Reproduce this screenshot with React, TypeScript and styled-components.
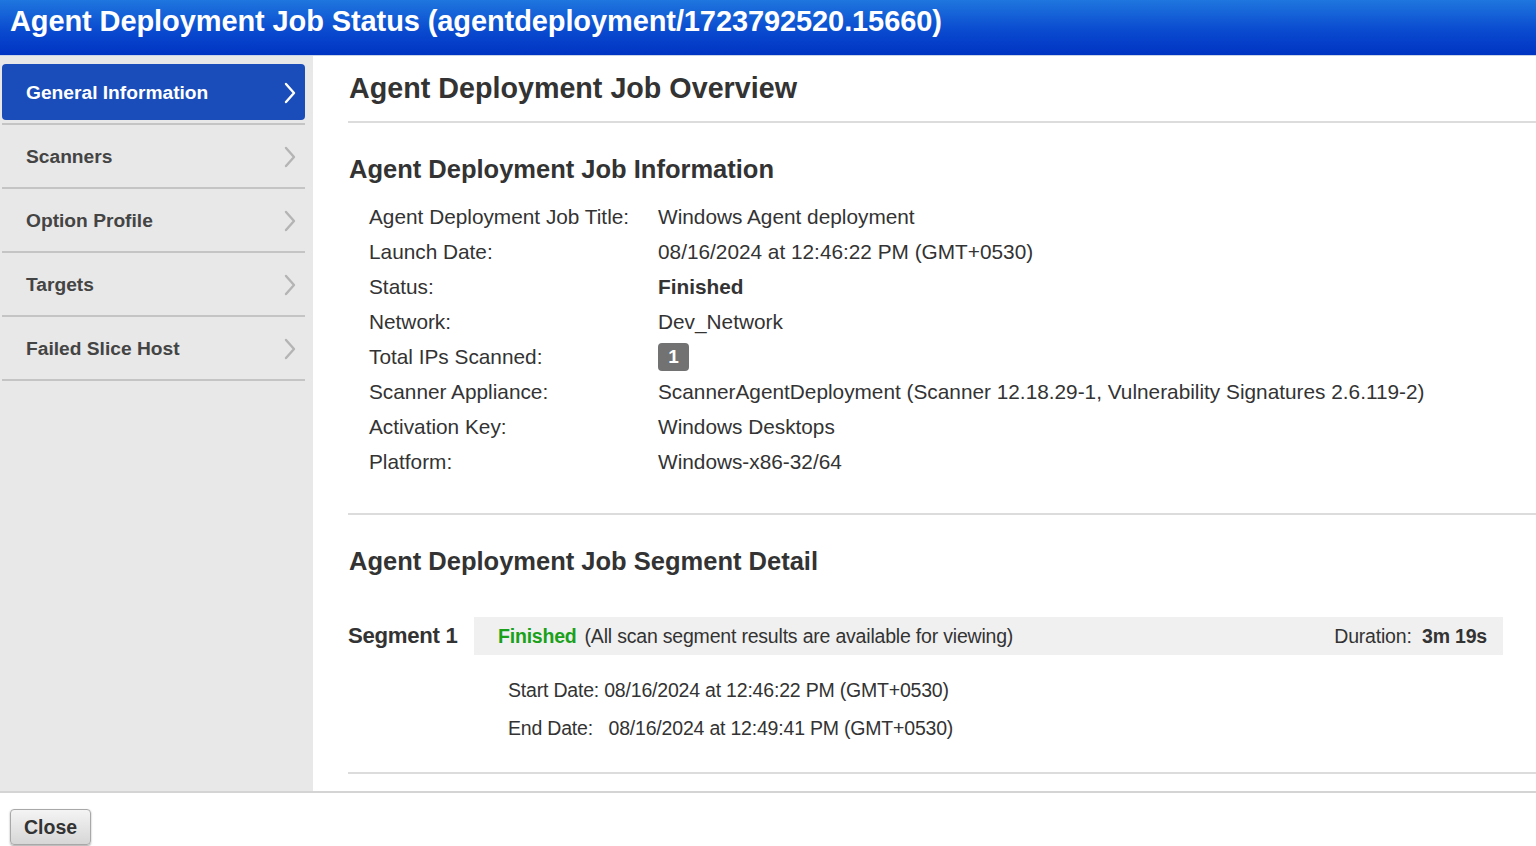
import React from 'react';
import styled, { createGlobalStyle } from 'styled-components';

const GlobalStyle = createGlobalStyle`
  html, body {
    margin: 0;
    padding: 0;
    background: #ffffff;
    font-family: "Liberation Sans", Arial, Helvetica, sans-serif;
    color: #333333;
  }
`;

const Page = styled.div`
  display: flex;
  flex-direction: column;
  width: 1536px;
  height: 846px;
  overflow: hidden;
`;

const TitleBar = styled.header`
  height: 56px;
  flex-shrink: 0;
  box-sizing: border-box;
  padding: 4px 10px 0;
  line-height: 34px;
  background: linear-gradient(to bottom, #1f76de 0%, #0a4bd0 55%, #0033c2 100%);
  border-bottom: 1px solid #c8d3e8;
  color: #ffffff;
  font-size: 29px;
  font-weight: bold;
  letter-spacing: -0.1px;
  white-space: nowrap;
`;

const Body = styled.div`
  display: flex;
  flex: 0 0 735px;
  border-bottom: 2px solid #d4d4d4;
`;

const Sidebar = styled.nav`
  width: 313px;
  flex-shrink: 0;
  background: #e8e8e8;
  padding: 8px 8px 0 2px;
  box-sizing: border-box;
`;

const NavRow = styled.div<{ $active?: boolean }>`
  padding-bottom: ${(p) => (p.$active ? '3px' : '0')};
  border-bottom: 2px solid #c4c4c4;
`;

const NavLink = styled.div<{ $active?: boolean }>`
  display: flex;
  align-items: center;
  justify-content: space-between;
  height: ${(p) => (p.$active ? '56px' : '62px')};
  padding: ${(p) => (p.$active ? '1px 8px 0 24px' : '1px 8px 0 24px')};
  box-sizing: border-box;
  border-radius: ${(p) => (p.$active ? '4px' : '0')};
  background: ${(p) => (p.$active ? '#1a4db9' : 'transparent')};
  color: ${(p) => (p.$active ? '#ffffff' : '#444444')};
  font-size: 19.2px;
  font-weight: bold;
`;

const Chevron = ({ color }: { color: string }) => (
  <svg width="14" height="22" viewBox="0 0 14 22" fill="none">
    <path d="M3 2 L11 11 L3 20" stroke={color} strokeWidth="2.4" strokeLinecap="round" strokeLinejoin="round" />
  </svg>
);

const Content = styled.main`
  flex: 1;
  padding: 0 0 0 35px;
  overflow: hidden;
`;

const PageHeading = styled.h1`
  margin: 0;
  padding: 16px 0 0 1px;
  height: 49px;
  font-size: 28.7px;
  font-weight: bold;
  color: #333333;
  border-bottom: 2px solid #dcdcdc;
`;

const Section = styled.section`
  border-bottom: 2px solid #dcdcdc;
`;

const SectionHeading = styled.h2`
  margin: 0;
  padding: 30px 0 0 1px;
  font-size: 25.5px;
  font-weight: bold;
  color: #333333;
  line-height: 32px;
`;

const InfoTable = styled.div`
  display: grid;
  grid-template-columns: 289px 1fr;
  grid-auto-rows: 35px;
  padding: 14px 0 34px 21px;
  font-size: 20.8px;
  color: #333333;
  align-items: center;
`;

const Value = styled.div<{ $bold?: boolean }>`
  font-weight: ${(p) => (p.$bold ? 'bold' : 'normal')};
`;

const CountBadge = styled.span`
  display: inline-flex;
  align-items: center;
  justify-content: center;
  width: 31px;
  height: 28px;
  border-radius: 4px;
  background: #727272;
  color: #ffffff;
  font-weight: bold;
  font-size: 19px;
  vertical-align: middle;
`;

const SegmentSection = styled.section`
  border-bottom: 2px solid #dcdcdc;
  padding-bottom: 25px;
`;

const SegmentRow = styled.div`
  display: flex;
  align-items: center;
  margin-top: 40px;
  padding-right: 33px;
`;

const SegmentLabel = styled.div`
  width: 126px;
  flex-shrink: 0;
  font-size: 22.2px;
  font-weight: bold;
  color: #333333;
  letter-spacing: -0.3px;
`;

const SegmentBar = styled.div`
  flex: 1;
  display: flex;
  align-items: center;
  justify-content: space-between;
  height: 38px;
  padding: 0 16px 0 24px;
  background: #f0f0f0;
  font-size: 19.5px;
  color: #333333;
  letter-spacing: -0.2px;
`;

const StatusOk = styled.span`
  color: #1aa01a;
  font-weight: bold;
  margin-right: 8px;
`;

const SegmentDates = styled.div`
  padding: 16px 0 0 160px;
  font-size: 19.5px;
  color: #333333;
  line-height: 38px;
  letter-spacing: -0.2px;
`;

const Footer = styled.footer`
  padding: 16px 10px 0;
`;

const CloseButton = styled.button`
  height: 36px;
  padding: 0 13px;
  border: 1px solid #a8a8a8;
  border-radius: 4px;
  background: linear-gradient(to bottom, #f4f4f4 0%, #d6d6d6 100%);
  box-shadow: 0 1px 2px rgba(0, 0, 0, 0.35);
  font-family: "Liberation Sans", Arial, sans-serif;
  font-size: 19.5px;
  font-weight: bold;
  color: #333333;
`;

const navItems = ['General Information', 'Scanners', 'Option Profile', 'Targets', 'Failed Slice Host'];

const info: { label: string; value: React.ReactNode; bold?: boolean }[] = [
  { label: 'Agent Deployment Job Title:', value: 'Windows Agent deployment' },
  { label: 'Launch Date:', value: '08/16/2024 at 12:46:22 PM (GMT+0530)' },
  { label: 'Status:', value: 'Finished', bold: true },
  { label: 'Network:', value: 'Dev_Network' },
  { label: 'Total IPs Scanned:', value: <CountBadge>1</CountBadge> },
  {
    label: 'Scanner Appliance:',
    value: 'ScannerAgentDeployment (Scanner 12.18.29-1, Vulnerability Signatures 2.6.119-2)',
  },
  { label: 'Activation Key:', value: 'Windows Desktops' },
  { label: 'Platform:', value: 'Windows-x86-32/64' },
];

export default function App() {
  return (
    <Page>
      <GlobalStyle />
      <TitleBar>Agent Deployment Job Status (agentdeployment/1723792520.15660)</TitleBar>
      <Body>
        <Sidebar>
          {navItems.map((item, i) => (
            <NavRow key={item} $active={i === 0}>
              <NavLink $active={i === 0}>
                {item}
                <Chevron color={i === 0 ? '#ffffff' : '#b4b4b4'} />
              </NavLink>
            </NavRow>
          ))}
        </Sidebar>
        <Content>
          <PageHeading>Agent Deployment Job Overview</PageHeading>
          <Section>
            <SectionHeading>Agent Deployment Job Information</SectionHeading>
            <InfoTable>
              {info.map((row) => (
                <React.Fragment key={row.label}>
                  <div>{row.label}</div>
                  <Value $bold={row.bold}>{row.value}</Value>
                </React.Fragment>
              ))}
            </InfoTable>
          </Section>
          <SegmentSection>
            <SectionHeading>Agent Deployment Job Segment Detail</SectionHeading>
            <SegmentRow>
              <SegmentLabel>Segment 1</SegmentLabel>
              <SegmentBar>
                <span>
                  <StatusOk>Finished</StatusOk>(All scan segment results are available for viewing)
                </span>
                <span>
                  Duration:&nbsp; <b>3m 19s</b>
                </span>
              </SegmentBar>
            </SegmentRow>
            <SegmentDates>
              <div>Start Date: 08/16/2024 at 12:46:22 PM (GMT+0530)</div>
              <div>End Date:&nbsp;&nbsp; 08/16/2024 at 12:49:41 PM (GMT+0530)</div>
            </SegmentDates>
          </SegmentSection>
        </Content>
      </Body>
      <Footer>
        <CloseButton>Close</CloseButton>
      </Footer>
    </Page>
  );
}
